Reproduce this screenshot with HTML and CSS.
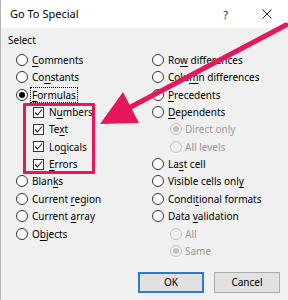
FILE: index.html
```html
<!DOCTYPE html>
<html>
<head>
<meta charset="utf-8">
<link rel="stylesheet" href="styles.css">
</head>
<body>
<div class="dialog">
  <div class="titlebar">
    <span class="title">Go To Special</span>
    <span class="help">?</span>
    <svg class="close" width="10" height="10" viewBox="0 0 10 10"><path d="M0.5 0.5 L9.5 9.5 M9.5 0.5 L0.5 9.5" stroke="#222" stroke-width="1"/></svg>
  </div>
  <div class="content">
    <div class="select">Select</div>
    <div class="columns">
      <div class="col left">
        <div class="opt"><span class="radio"></span><span class="lbl"><u>C</u>omments</span></div>
        <div class="opt"><span class="radio"></span><span class="lbl">Co<u>n</u>stants</span></div>
        <div class="opt"><span class="radio on"></span><span class="lbl focus"><u>F</u>ormulas</span></div>
        <div class="opt chk"><span class="check"><svg width="11" height="11" viewBox="0 0 11 11"><path d="M2 5.5 L4.5 8 L9 2.5" fill="none" stroke="#222" stroke-width="1.1"/></svg></span><span class="lbl">N<u>u</u>mbers</span></div>
        <div class="opt chk"><span class="check"><svg width="11" height="11" viewBox="0 0 11 11"><path d="M2 5.5 L4.5 8 L9 2.5" fill="none" stroke="#222" stroke-width="1.1"/></svg></span><span class="lbl">Te<u>x</u>t</span></div>
        <div class="opt chk"><span class="check"><svg width="11" height="11" viewBox="0 0 11 11"><path d="M2 5.5 L4.5 8 L9 2.5" fill="none" stroke="#222" stroke-width="1.1"/></svg></span><span class="lbl">Lo<u>g</u>icals</span></div>
        <div class="opt chk"><span class="check"><svg width="11" height="11" viewBox="0 0 11 11"><path d="M2 5.5 L4.5 8 L9 2.5" fill="none" stroke="#222" stroke-width="1.1"/></svg></span><span class="lbl"><u>E</u>rrors</span></div>
        <div class="opt"><span class="radio"></span><span class="lbl">Blan<u>k</u>s</span></div>
        <div class="opt"><span class="radio"></span><span class="lbl">Current <u>r</u>egion</span></div>
        <div class="opt"><span class="radio"></span><span class="lbl">Current <u>a</u>rray</span></div>
        <div class="opt"><span class="radio"></span><span class="lbl">O<u>b</u>jects</span></div>
      </div>
      <div class="col right">
        <div class="opt"><span class="radio"></span><span class="lbl">Ro<u>w</u> differences</span></div>
        <div class="opt"><span class="radio"></span><span class="lbl">Colu<u>m</u>n differences</span></div>
        <div class="opt"><span class="radio"></span><span class="lbl"><u>P</u>recedents</span></div>
        <div class="opt"><span class="radio"></span><span class="lbl"><u>D</u>ependents</span></div>
        <div class="opt sub dis"><span class="radio on"></span><span class="lbl">Direct only</span></div>
        <div class="opt sub dis"><span class="radio"></span><span class="lbl">All levels</span></div>
        <div class="opt"><span class="radio"></span><span class="lbl">La<u>s</u>t cell</span></div>
        <div class="opt"><span class="radio"></span><span class="lbl">Visible cells onl<u>y</u></span></div>
        <div class="opt"><span class="radio"></span><span class="lbl">Condi<u>t</u>ional formats</span></div>
        <div class="opt"><span class="radio"></span><span class="lbl">Data <u>v</u>alidation</span></div>
        <div class="opt sub dis"><span class="radio"></span><span class="lbl">All</span></div>
        <div class="opt sub dis"><span class="radio on"></span><span class="lbl">Same</span></div>
      </div>
    </div>
    <div class="buttons">
      <button class="btn default">OK</button>
      <button class="btn">Cancel</button>
    </div>
  </div>
  <div class="highlight"></div>
  <svg class="arrow" width="288" height="300" viewBox="0 0 288 300">
    <line x1="286" y1="25" x2="125" y2="110" stroke="#e5185d" stroke-width="5" stroke-linecap="round"/>
    <polygon points="100,124 123,92 139,123" fill="#e5185d"/>
  </svg>
</div>
</body>
</html>
```
FILE: styles.css
```css
* { box-sizing: border-box; }
html, body { margin: 0; padding: 0; }
body {
  width: 288px;
  height: 300px;
  overflow: hidden;
  font-family: "Noto Sans", "Open Sans", sans-serif;
  font-size: 10px;
  color: #000;
  background: #f0f0f0;
}
.dialog {
  position: relative;
  width: 288px;
  height: 300px;
  border-left: 1px solid #b4b4b4;
  background: #f0f0f0;
}
.titlebar {
  height: 28px;
  background: #fff;
  display: flex;
  align-items: center;
  padding-left: 9px;
}
.title {
  font-size: 11px;
  flex: 1;
  padding-bottom: 1px;
}
.help {
  font-size: 11px;
  color: #222;
  margin-right: 34px;
}
.close {
  margin-right: 16px;
}
.content {
  padding-top: 5px;
}
.select {
  padding-left: 7px;
  height: 14px;
  line-height: 14px;
  margin-bottom: 4.3px;
}
.columns {
  display: flex;
}
.col {
  display: flex;
  flex-direction: column;
}
.left {
  width: 151px;
  padding-left: 15px;
}
.opt {
  height: 17.36px;
  display: flex;
  align-items: center;
}
.radio {
  width: 12px;
  height: 12px;
  border: 1px solid #333;
  border-radius: 50%;
  background: #fff;
  margin-right: 4px;
  flex: none;
  display: flex;
  align-items: center;
  justify-content: center;
}
.radio.on::after {
  content: "";
  width: 6px;
  height: 6px;
  border-radius: 50%;
  background: #000;
}
.chk {
  padding-left: 17px;
}
.check {
  width: 11px;
  height: 11px;
  border: 1px solid #333;
  background: #fff;
  margin-right: 5px;
  flex: none;
  display: flex;
}
.check svg { display: block; margin: -1px; }
.sub {
  padding-left: 18px;
}
.sub .radio { margin-right: 3px; }
.dis { color: #9a9a9a; }
.dis .radio { border-color: #c4c4c4; background: #f0f0f0; }
.dis .radio.on::after { background: #c4c4c4; }
.lbl { line-height: 14px; white-space: nowrap; }
.focus {
  outline: 1px dotted #000;
  outline-offset: 0;
  padding: 0 1px;
  margin-left: -1px;
}
u { text-decoration-thickness: 1px; text-underline-offset: 2px; }
.buttons {
  display: flex;
  justify-content: flex-end;
  gap: 10px;
  padding-right: 8px;
  margin-top: 12px;
}
.btn {
  width: 66px;
  height: 21px;
  font-family: inherit;
  font-size: 10px;
  background: #e1e1e1;
  border: 1px solid #adadad;
  padding: 0;
  color: #000;
}
.btn.default {
  border: 2px solid #2a7ad1;
}
.highlight {
  position: absolute;
  left: 22px;
  top: 103px;
  width: 72px;
  height: 71px;
  border: 3px solid #e5185d;
  border-radius: 1px;
}
.arrow {
  position: absolute;
  left: -1px;
  top: 0;
  pointer-events: none;
}
```
